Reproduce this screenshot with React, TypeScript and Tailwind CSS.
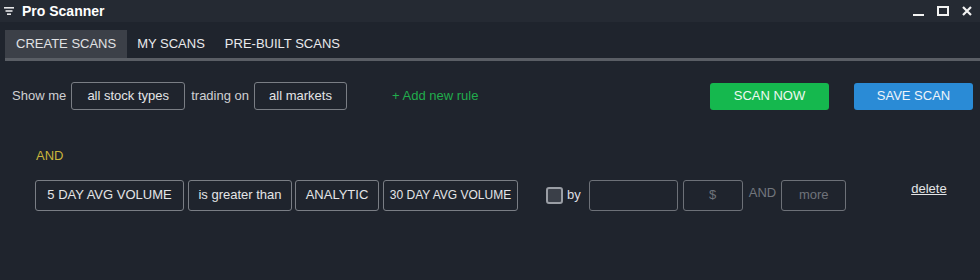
import React from "react";

const box = "flex items-center justify-center rounded-[3px] border border-[#7a7e85] text-[#e4e5e7]";

function FilterIcon() {
  return (
    <svg width="10" height="9" viewBox="0 0 10 9" fill="#e6e7e9">
      <rect x="0" y="0" width="10" height="1.6" />
      <rect x="1.5" y="3.2" width="7" height="1.6" />
      <rect x="3" y="6.4" width="4" height="1.6" />
    </svg>
  );
}

export default function App() {
  return (
    <div className="h-[280px] w-[980px] overflow-hidden bg-[#1f242d] text-[13px] text-[#dcdde0]" style={{ fontFamily: '"Liberation Sans", Arial, sans-serif' }}>
      {/* title bar */}
      <div className="flex h-[22px] items-center justify-between bg-[#252a33] pl-[4px] pr-[7px]">
        <div className="flex items-center gap-[8px]">
          <FilterIcon />
          <span className="text-[14px] font-bold text-white">Pro Scanner</span>
        </div>
        <div className="flex items-center gap-[12px]">
          <svg width="12" height="12" viewBox="0 0 12 12" fill="#f2f2f2"><rect x="0" y="9" width="11" height="2" /></svg>
          <svg width="12" height="12" viewBox="0 0 12 12" fill="none" stroke="#f2f2f2" strokeWidth="2"><rect x="1" y="2" width="10" height="8" /></svg>
          <svg width="12" height="12" viewBox="0 0 12 12" fill="none" stroke="#f2f2f2" strokeWidth="2.2"><path d="M2 2l8 8M10 2l-8 8" /></svg>
        </div>
      </div>

      {/* tabs */}
      <div className="ml-[5px] mt-[8px] flex h-[28px] items-stretch text-[13px]">
        <div className="flex items-center bg-[#3c4048] px-[11px] text-[#e1e2e4]">CREATE SCANS</div>
        <div className="flex items-center px-[10px] text-[#e9eaec]">MY SCANS</div>
        <div className="flex items-center px-[10px] text-[#e9eaec]">PRE-BUILT SCANS</div>
      </div>
      <div className="ml-[5px] h-[3px] bg-[#5a5e65]" />

      {/* row 1 */}
      <div className="mt-[21px] flex h-[28px] items-center pl-[12px] pr-[7px]">
        <span className="text-[#cfd0d3]">Show me</span>
        <div className={`${box} ml-[5px] h-[28px] w-[114px]`}>all stock types</div>
        <span className="ml-[6px] text-[#cfd0d3]">trading on</span>
        <div className={`${box} ml-[5px] h-[28px] w-[93px]`}>all markets</div>
        <span className="ml-[45px] text-[#21ad4c]">+ Add new rule</span>
        <div className="flex-1" />
        <button className="h-[27px] w-[119px] rounded-[3px] bg-[#15b84e] text-[13px] text-[#eef8f1]">SCAN NOW</button>
        <button className="ml-[25px] h-[27px] w-[119px] rounded-[3px] bg-[#2a8bd6] text-[13px] text-[#eef4fa]">SAVE SCAN</button>
      </div>

      {/* AND label */}
      <div className="ml-[36px] mt-[36px] text-[#c9b53b]">AND</div>

      {/* row 2 */}
      <div className="mt-[14px] flex h-[31px] items-center pl-[35px]">
        <div className={`${box} h-[31px] w-[149px]`}>5 DAY AVG VOLUME</div>
        <div className={`${box} ml-[4px] h-[31px] w-[104px]`}>is greater than</div>
        <div className={`${box} ml-[3px] h-[31px] w-[84px]`}>ANALYTIC</div>
        <div className={`${box} ml-[4px] h-[31px] w-[135px] text-[12px]`}>30 DAY AVG VOLUME</div>
        <div className="ml-[28px] h-[17px] w-[17px] rounded-[3px] border-2 border-[#9a9ea5] bg-[#3a3f48]" />
        <span className="ml-[4px] text-[#dcdde0]">by</span>
        <div className="ml-[8px] h-[31px] w-[89px] rounded-[3px] border border-[#6d7178]" />
        <div className="ml-[5px] flex h-[31px] w-[60px] items-center justify-center rounded-[3px] border border-[#6d7178] text-[#6f737a]">$</div>
        <span className="ml-[6px] mb-[5px] text-[#72767d]">AND</span>
        <div className="ml-[5px] flex h-[31px] w-[65px] items-center justify-center rounded-[3px] border border-[#6d7178] text-[#6f737a]">more</div>
        <span className="ml-[65px] mb-[12px] text-[#e4e5e7] underline">delete</span>
      </div>
    </div>
  );
}
